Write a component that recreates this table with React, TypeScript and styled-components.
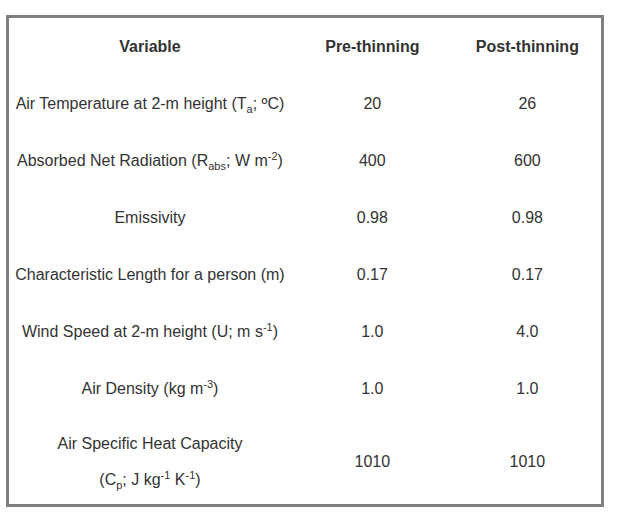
import React from "react";
import styled, { createGlobalStyle } from "styled-components";

type Row = {
  label: React.ReactNode;
  pre: string;
  post: string;
};

const rows: Row[] = [
  {
    label: (
      <>
        Air Temperature at 2-m height (T<sub>a</sub>; ºC)
      </>
    ),
    pre: "20",
    post: "26",
  },
  {
    label: (
      <>
        Absorbed Net Radiation (R<sub>abs</sub>; W m<sup>-2</sup>)
      </>
    ),
    pre: "400",
    post: "600",
  },
  { label: "Emissivity", pre: "0.98", post: "0.98" },
  { label: "Characteristic Length for a person (m)", pre: "0.17", post: "0.17" },
  {
    label: (
      <>
        Wind Speed at 2-m height (U; m s<sup>-1</sup>)
      </>
    ),
    pre: "1.0",
    post: "4.0",
  },
  {
    label: (
      <>
        Air Density (kg m<sup>-3</sup>)
      </>
    ),
    pre: "1.0",
    post: "1.0",
  },
  {
    label: (
      <>
        Air Specific Heat Capacity
        <br />
        (C<sub>p</sub>; J kg<sup>-1</sup> K<sup>-1</sup>)
      </>
    ),
    pre: "1010",
    post: "1010",
  },
];

function App() {
  return (
    <>
      <GlobalStyle />
      <Page>
        <Table>
          <colgroup>
            <col style={{ width: 282 }} />
            <col style={{ width: 162 }} />
            <col style={{ width: 148 }} />
          </colgroup>
          <thead>
            <tr>
              <HeadCell>Variable</HeadCell>
              <HeadCell>Pre-thinning</HeadCell>
              <HeadCell>Post-thinning</HeadCell>
            </tr>
          </thead>
          <tbody>
            {rows.map((row, i) => (
              <tr key={i}>
                <Cell>{row.label}</Cell>
                <Cell>{row.pre}</Cell>
                <Cell>{row.post}</Cell>
              </tr>
            ))}
          </tbody>
        </Table>
      </Page>
    </>
  );
}

const GlobalStyle = createGlobalStyle`
  body {
    margin: 0;
    background: #ffffff;
    font-family: "Liberation Sans", Arial, sans-serif;
  }
`;

const Page = styled.div`
  padding: 15px 0 0 6px;
`;

const Table = styled.table`
  width: 598px;
  border-collapse: collapse;
  border: 3px solid #808080;
  table-layout: fixed;
  color: #333333;
  font-size: 16px;

  sub,
  sup {
    font-size: 11px;
    line-height: 0;
  }
`;

const HeadCell = styled.th`
  height: 57px;
  padding: 9px 6px 7px;
  box-sizing: border-box;
  text-align: center;
  vertical-align: middle;
  font-weight: 700;
  line-height: 36px;
`;

const Cell = styled.td`
  height: 57px;
  padding: 10px 6px 6px;
  box-sizing: border-box;
  text-align: center;
  vertical-align: middle;
  line-height: 36px;
`;

export default App;
